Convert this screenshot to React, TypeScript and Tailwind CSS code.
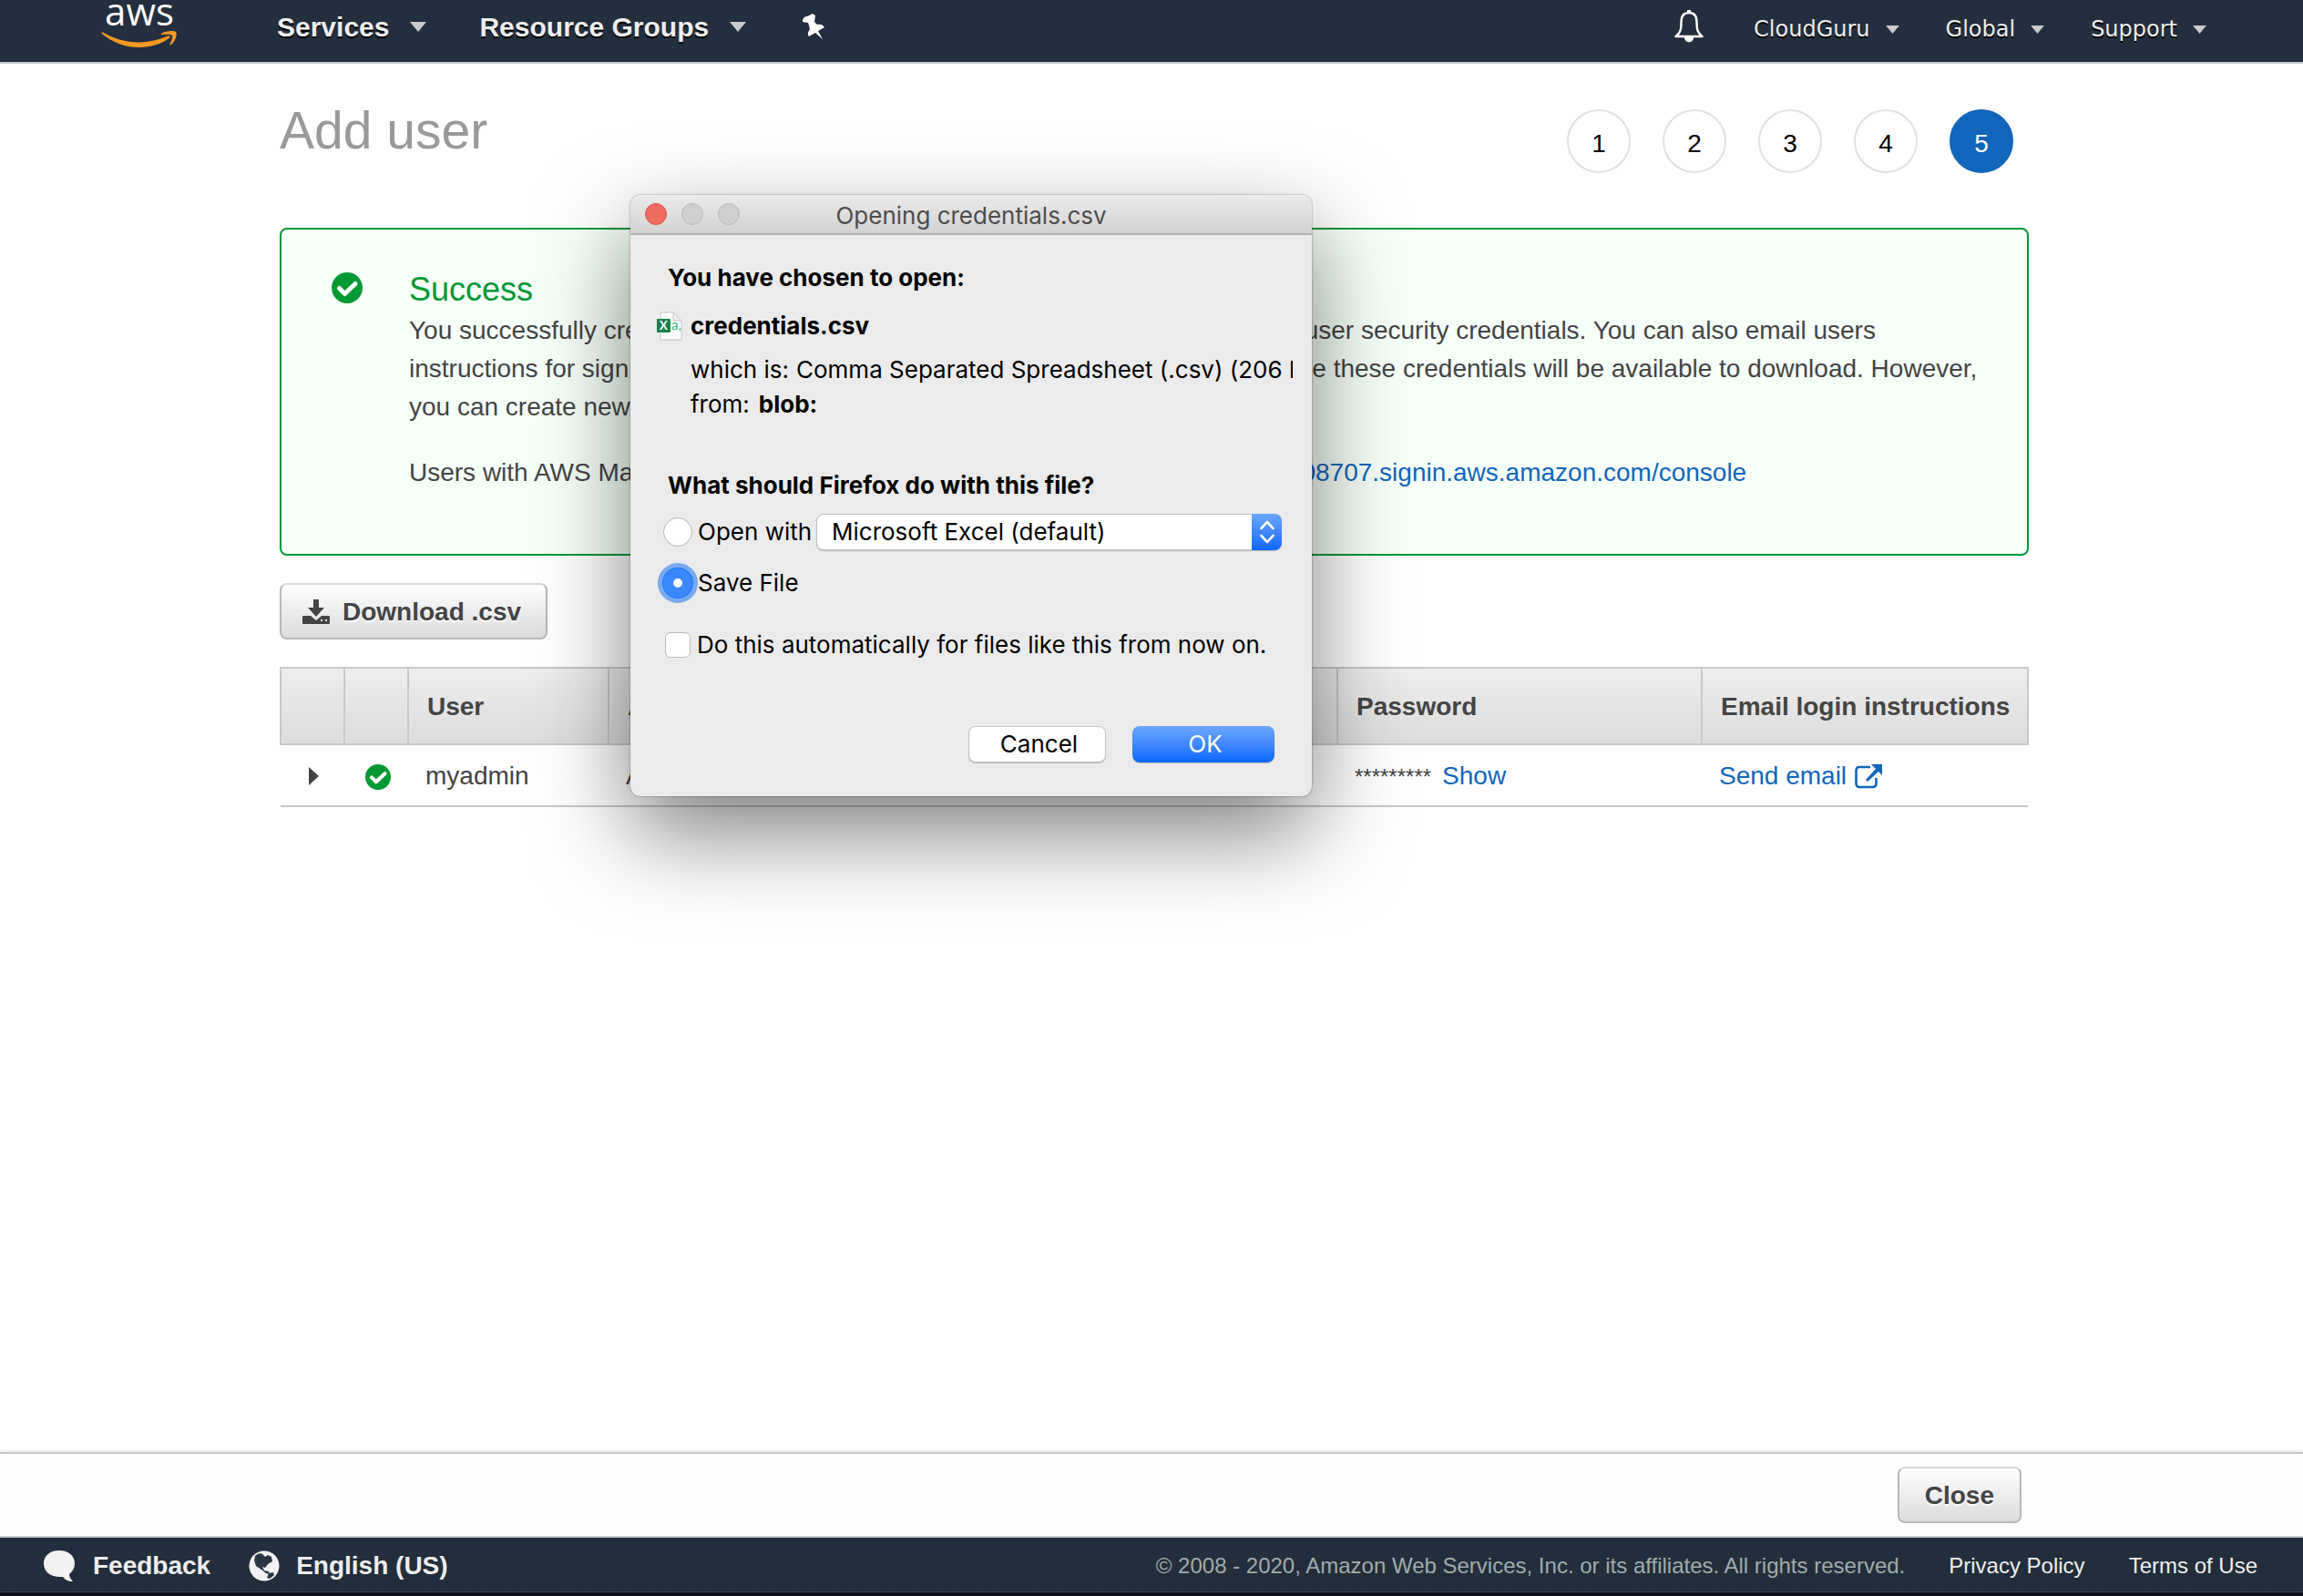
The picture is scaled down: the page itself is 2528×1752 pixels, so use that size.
import { useState } from "react";
import type { ReactNode } from "react";

const steps = [1, 2, 3, 4, 5];

const headerCell =
  "border-2 border-[#c8c8c8] px-5 pt-[2px] text-left align-middle font-bold whitespace-nowrap";
const bodyCell = "px-[19px] pt-[2px]";
const greyButton =
  "flex h-[62px] items-center rounded-lg border-2 border-[#b8b8b8] border-t-[#d8d8d8] bg-linear-to-b from-white to-[#dcdcdc] pt-[2px] text-[28px] font-bold text-[#444] [text-shadow:0_2px_0_#fff]";

const Caret = ({ small }: { small?: boolean }) => (
  <svg
    viewBox="0 0 18 11"
    className={small ? "h-[9px] w-[15px]" : "h-[11px] w-[18px]"}
    aria-hidden="true"
  >
    <path d="M0 0h18L9 11z" fill="#c9cacb" />
  </svg>
);

const CheckCircle = ({ className }: { className: string }) => (
  <svg viewBox="0 0 34 34" className={className} aria-hidden="true">
    <circle cx="17" cy="17" r="17" fill="#009933" />
    <path
      d="M8.500 17.500l6 6L26 12.500"
      fill="none"
      stroke="#fff"
      strokeWidth="5"
      strokeLinecap="round"
      strokeLinejoin="round"
    />
  </svg>
);

const AwsLogo = () => (
  <a href="#home" aria-label="AWS" className="block w-[84px]">
    <svg viewBox="0 0 84 54" className="h-[54px] w-[84px]">
      <text
        x="42"
        y="28"
        textAnchor="middle"
        fontSize="42"
        fontFamily="'Open Sans', sans-serif"
        fill="#fff"
      >
        aws
      </text>
      <path
        d="M2 35.500c12 7 25 11 39 11 11 0 23-3 32-7 2-1 3.500 1 2 2.300C66 48.500 54 52 42 52 26 52 12 46 1 37c-1-1 0-2 1-1.500z"
        fill="#f7981f"
      />
      <path
        d="M66 37c5-3.500 14-3.500 16-2s0 10-5 14c-1 .8-2 .2-1.500-.8 1.500-3 3.500-8 2.500-9.300-1.500-1.500-8-1-11.500-.7-1 0-1.500-.6-.5-1.200z"
        fill="#f7981f"
      />
    </svg>
  </a>
);

const MenuButton = ({ children }: { children: ReactNode }) => (
  <button className="flex items-center gap-[23px] text-[30px] font-bold [text-shadow:0_2px_0_#000]">
    {children}
    <Caret />
  </button>
);

const SmallMenuButton = ({ children }: { children: ReactNode }) => (
  <button className="flex items-center gap-[17px] font-['DejaVu_Sans',sans-serif] text-[24px] [text-shadow:0_2px_0_#000]">
    {children}
    <Caret small />
  </button>
);

const TopBar = () => (
  <header className="flex h-[70px] items-start justify-between border-b-2 border-[#c8cbcb] bg-[#232f3e] pr-[106px] pl-[111px] text-[#eee]">
    <div className="flex items-start">
      <AwsLogo />
      <nav className="flex h-[58px] items-center gap-[58px] pl-[109px]">
        <MenuButton>Services</MenuButton>
        <MenuButton>Resource Groups</MenuButton>
        <button aria-label="Pin" className="pl-1">
          <svg viewBox="0 0 24 28" className="h-7 w-6" aria-hidden="true">
            <path
              d="M11 0l3 2-1 7 3 3c4-1 6 0 8 3l-7 4 5 9-8-7-7 4c-2-3-1-5 1-8L6 10l-6-1c0-4 2-6 5-6z"
              fill="#fff"
            />
          </svg>
        </button>
      </nav>
    </div>
    <nav className="flex h-16 items-center gap-[51px]">
      <button aria-label="Notifications" className="mr-[4px] pb-[6px]">
        <svg viewBox="0 0 32 36" className="h-9 w-8" aria-hidden="true">
          <path
            d="M16 3c-6 0-8.500 4-8.500 10 0 9-1 12-6 16h29c-5-4-6-7-6-16 0-6-2.500-10-8.500-10z"
            fill="none"
            stroke="#fff"
            strokeWidth="2.400"
            strokeLinejoin="round"
          />
          <path d="M14 0h4v4h-4zM11 30h10c0 7-10 7-10 0z" fill="#fff" />
        </svg>
      </button>
      <SmallMenuButton>CloudGuru</SmallMenuButton>
      <SmallMenuButton>Global</SmallMenuButton>
      <SmallMenuButton>Support</SmallMenuButton>
    </nav>
  </header>
);

const Steps = () => (
  <ol className="flex gap-[35px] pt-[2px] pr-[17px]">
    {steps.map((step) => (
      <li
        key={step}
        className={
          step === 5
            ? "flex size-[70px] items-center justify-center rounded-full border-2 border-[#1166bb] bg-[#1166bb] pt-[6px] text-[28px] text-white"
            : "flex size-[70px] items-center justify-center rounded-full border-2 border-[#e0e0e0] pt-[6px] text-[28px] text-black"
        }
      >
        {step}
      </li>
    ))}
  </ol>
);

const SuccessPanel = () => (
  <section className="mt-[60px] flex h-[360px] items-start rounded-lg border-2 border-[#009933] bg-[#f6fff8] pt-[43px] pr-[40px] pl-[55px]">
    <CheckCircle className="mt-1 size-[34px] shrink-0" />
    <div className="ml-[51px] text-[28px] leading-[42px]">
      <h2 className="mb-[2px] text-[36px] leading-[45px] text-[#009933]">Success</h2>
      <p>
        You successfully created the users shown below.&nbsp;&nbsp; You can view and
        download user security credentials. You can also email users instructions for
        signing in to the AWS Management Console.&nbsp;&nbsp; This is the last time
        these credentials will be available to download. However, you can create new
        credentials at any time.
      </p>
      <p className="mt-[30px]">
        Users with AWS Management Console access can sign-in at:
        <a href="#console" className="ml-7 text-[#1166bb]">
          https://500000008707.signin.aws.amazon.com/console
        </a>
      </p>
    </div>
  </section>
);

const UsersTable = () => (
  <table className="mt-[30px] w-full table-fixed border-collapse">
    <colgroup>
      <col className="w-[70px]" />
      <col className="w-[70px]" />
      <col className="w-[220px]" />
      <col className="w-[400px]" />
      <col />
      <col className="w-[400px]" />
      <col className="w-[358px]" />
    </colgroup>
    <thead>
      <tr className="h-[84px] bg-linear-to-b from-[#eee] to-[#ddd]">
        <th className={headerCell} aria-label="Expand" />
        <th className={headerCell} aria-label="Status" />
        <th className={headerCell}>User</th>
        <th className={headerCell}>Access key ID</th>
        <th className={headerCell}>Secret access key</th>
        <th className={headerCell}>Password</th>
        <th className={headerCell}>Email login instructions</th>
      </tr>
    </thead>
    <tbody>
      <tr className="h-[68px] border-b-2 border-[#c8c8c8]">
        <td className="pt-[2px]">
          <button aria-label="Show details" className="ml-[31px] block">
            <svg viewBox="0 0 11 20" className="h-5 w-[11px]" aria-hidden="true">
              <path d="M0 0l11 10L0 20z" fill="#444" />
            </svg>
          </button>
        </td>
        <td className="pt-[3px]">
          <CheckCircle className="ml-[23px] size-7" />
        </td>
        <td className={bodyCell}>myadmin</td>
        <td className={bodyCell}>AKIA</td>
        <td className={bodyCell}>*********</td>
        <td className={bodyCell}>
          <span className="text-[24px]">*********</span>
          <a href="#show" className="ml-3 text-[#1166bb]">
            Show
          </a>
        </td>
        <td className={bodyCell}>
          <a href="#email" className="flex items-center gap-[9px] text-[#1166bb]">
            Send email
            <svg viewBox="0 0 30 28" className="h-7 w-[30px]" aria-hidden="true">
              <path
                d="M17 4H5Q1.500 4 1.500 8v14q0 4 4 4h14q4 0 4-4v-6"
                fill="none"
                stroke="#1166bb"
                strokeWidth="2.600"
              />
              <path d="M18 1h12v12l-4-4-12 11-2-2L23 6z" fill="#1166bb" />
            </svg>
          </a>
        </td>
      </tr>
    </tbody>
  </table>
);

const CsvIcon = () => (
  <svg viewBox="0 0 28 32" className="h-8 w-7 shrink-0" aria-hidden="true">
    <path d="M4 1h14l9 9v21H4z" fill="#fff" stroke="#c4c4c4" />
    <path d="M18 1v9h9z" fill="#f0f0f0" stroke="#c4c4c4" />
    <rect x="0" y="8" width="15" height="15" rx="1" fill="#17834a" />
    <text x="3" y="20" fontSize="13" fontWeight="700" fill="#fff" fontFamily="Lato">
      X
    </text>
    <text x="16" y="20" fontSize="15" fill="#2ebf7c" fontFamily="Lato">
      a,
    </text>
  </svg>
);

const OpenDialog = () => {
  const [action, setAction] = useState("save");
  const [always, setAlways] = useState(false);

  return (
    <div
      role="dialog"
      aria-label="Opening credentials.csv"
      className="absolute top-[214px] left-[692px] w-[748px] overflow-clip rounded-[11px] bg-[#ebebeb] font-['Inter',sans-serif] text-[26px] leading-[32px] text-black shadow-[0_0_2px_rgba(0,0,0,0.5),0_40px_100px_rgba(0,0,0,0.5)]"
    >
      <div className="flex h-11 items-center border-b-2 border-[#b1b1b1] bg-linear-to-b from-[#ececec] to-[#d2d2d2] px-4">
        <div className="flex w-[104px] gap-4">
          <button
            aria-label="Close window"
            className="size-6 rounded-full border border-[#d9574d] bg-[#ed6a5f]"
          />
          <button
            aria-label="Minimize"
            className="size-6 rounded-full border border-[#b9b9b9] bg-[#cfcfcf]"
          />
          <button
            aria-label="Zoom"
            className="size-6 rounded-full border border-[#b9b9b9] bg-[#cfcfcf]"
          />
        </div>
        <h2 className="flex-1 pt-1 pr-[104px] text-center text-[#4d4d4d]">
          Opening credentials.csv
        </h2>
      </div>
      <div className="px-[29px] pt-[31px] pb-[37px]">
        <p className="pl-3 font-bold">You have chosen to open:</p>
        <div className="mt-[21px] flex items-center gap-[9px]">
          <CsvIcon />
          <p className="font-bold">credentials.csv</p>
        </div>
        <div className="mt-4 -mr-2 ml-[37px] flex gap-2 whitespace-nowrap">
          <span>which is:</span>
          <span className="w-[545px] shrink-0 overflow-hidden">
            Comma Separated Spreadsheet (.csv) (206 bytes)
          </span>
        </div>
        <p className="mt-[6px] ml-[37px] flex gap-[10px]">
          from: <b>blob:</b>
        </p>
        <p className="mt-[57px] pl-3 font-bold">What should Firefox do with this file?</p>
        <div className="mt-[15px] flex items-center pl-[7px]">
          <input
            id="open-with"
            type="radio"
            name="action"
            checked={action === "open"}
            onChange={() => setAction("open")}
            className="size-8 appearance-none rounded-full border border-[#b5b5b5] bg-white checked:border-[11px] checked:border-[#3b88fd]"
          />
          <label htmlFor="open-with" className="w-[136px] pl-[6px] whitespace-nowrap">
            Open with
          </label>
          <div className="relative">
            <select
              aria-label="Application"
              className="block h-10 w-[511px] appearance-none rounded-lg border border-[#c4c4c4] bg-white pl-4 shadow-[0_1px_1px_rgba(0,0,0,0.2)]"
            >
              <option>Microsoft Excel (default)</option>
            </select>
            <span className="pointer-events-none absolute top-0 right-0 flex h-10 w-[33px] items-center justify-center rounded-r-lg bg-linear-to-b from-[#6ba6fb] to-[#0566ff]">
              <svg viewBox="0 0 16 26" className="h-[26px] w-4" aria-hidden="true">
                <path
                  d="M1.500 9L8 2l6.500 7M1.500 17L8 24l6.500-7"
                  fill="none"
                  stroke="#fff"
                  strokeWidth="2.600"
                  strokeLinecap="round"
                  strokeLinejoin="round"
                />
              </svg>
            </span>
          </div>
        </div>
        <div className="mt-5 flex items-center pl-[7px]">
          <input
            id="save-file"
            type="radio"
            name="action"
            checked={action === "save"}
            onChange={() => setAction("save")}
            className="size-8 appearance-none rounded-full border border-[#b5b5b5] bg-white checked:border-[11px] checked:border-[#3b88fd] checked:shadow-[0_0_0_1px_#1f75f6,0_0_0_6px_#78aaf0]"
          />
          <label htmlFor="save-file" className="pl-[6px]">
            Save File
          </label>
        </div>
        <div className="mt-[36px] flex items-center pl-[9px]">
          <input
            id="always"
            type="checkbox"
            checked={always}
            onChange={(e) => setAlways(e.target.checked)}
            className="size-7 appearance-none rounded-md border border-[#bdbdbd] bg-white checked:bg-[#3b88fd]"
          />
          <label htmlFor="always" className="pl-[7px] whitespace-nowrap">
            Do this automatically for files like this from now on.
          </label>
        </div>
        <div className="mt-[73px] flex justify-end gap-[29px] pr-3">
          <button className="h-10 w-[151px] rounded-lg border border-[#c4c4c4] bg-white pl-1 shadow-[0_1px_1px_rgba(0,0,0,0.2)]">
            Cancel
          </button>
          <button className="h-10 w-[156px] rounded-lg bg-linear-to-b from-[#6ba6fb] to-[#0566ff] pl-1 text-white shadow-[0_1px_1px_rgba(0,0,0,0.2)]">
            OK
          </button>
        </div>
      </div>
    </div>
  );
};

const BottomBar = () => (
  <footer>
    <div className="flex h-[92px] items-center justify-end border-t-2 border-[#c8c8c8] bg-[#fefefe] pr-[309px] shadow-[0_-2px_2px_rgba(0,0,0,0.08)]">
      <button className={`${greyButton} px-7`}>Close</button>
    </div>
    <div className="flex h-[61px] items-center border-t-2 border-[#c8cbcb] bg-linear-to-b from-[#232f3e] to-[#212d3a] pt-[2px] pr-[50px] pl-12 text-[#eee]">
      <button className="flex items-center gap-5 text-[28px] font-bold">
        <svg viewBox="0 0 34 34" className="size-[34px]" aria-hidden="true">
          <path
            d="M17 0c10 0 17 6 17 14 0 5-2 9-6 12 0 3 2 6 4 8-5 0-9-2-11-5-13 1-21-5-21-15C0 6 7 0 17 0z"
            fill="#f2f2f2"
          />
        </svg>
        Feedback
      </button>
      <button className="ml-[42px] flex items-center gap-[18px] text-[28px] font-bold">
        <svg viewBox="0 0 34 34" className="size-[34px]" aria-hidden="true">
          <circle cx="17" cy="17" r="16.500" fill="#f2f2f2" />
          <path
            d="M7 6c4-4 8-3 9-1l2 2 3-2 4 2 1 5-5 3-3 4-3-1 2 4 5 1 1 3-4-1-5-4-6-4-2-6z"
            fill="#2a3544"
          />
          <path d="M22 25l5-1 1 3-5 4-3-1z" fill="#2a3544" />
        </svg>
        English (US)
      </button>
      <p className="ml-auto text-[24px] text-[#a0acac]">
        © 2008 - 2020, Amazon Web Services, Inc. or its affiliates. All rights reserved.
      </p>
      <a href="#privacy" className="ml-12 text-[24px]">
        Privacy Policy
      </a>
      <a href="#terms" className="ml-12 text-[24px]">
        Terms of Use
      </a>
    </div>
    <div className="h-[5px] border-t border-[#3a4552] bg-[#0d0e1b]" />
  </footer>
);

const App = () => (
  <div className="relative flex min-h-screen flex-col bg-white font-['Liberation_Sans',Arial,sans-serif] text-[28px] text-[#444]">
    <TopBar />
    <main className="flex-1 pt-12 pr-[301px] pl-[307px]">
      <div className="flex h-[72px] items-start justify-between">
        <h1 className="text-[57px] leading-[50px] text-[#999]">Add user</h1>
        <Steps />
      </div>
      <SuccessPanel />
      <button className={`${greyButton} mt-[30px] gap-[14px] pr-[27px] pl-[23px]`}>
        <svg viewBox="0 0 30 28" className="h-7 w-[30px]" aria-hidden="true">
          <path d="M12 0h6v9h6l-9 10-9-10h6z" fill="#444" />
          <path
            fillRule="evenodd"
            d="M1 18h8l6 5 6-5h8q1 0 1 1v7q0 1-1 1H1q-1 0-1-1v-7q0-1 1-1zM20 22v2h2v-2zM25 22v2h2v-2z"
            fill="#444"
          />
        </svg>
        Download .csv
      </button>
      <UsersTable />
    </main>
    <BottomBar />
    <OpenDialog />
  </div>
);

export default App;
